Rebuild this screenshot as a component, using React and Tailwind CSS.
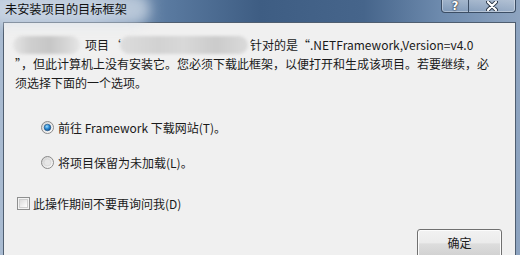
export default function App() {
  return (
    <div className="relative w-[520px] h-[255px] overflow-hidden flex flex-col font-['Noto_Sans_CJK_SC',sans-serif] text-[12px] text-[#1a1a1a] bg-[linear-gradient(to_right,#a9bbd1_0%,#9db1ca_18%,#5a7aa0_32%,#3e5d83_50%,#46658b_70%,#6e8bae_85%,#8ea4c0_100%)]">
      {/* Title bar */}
      <div className="relative h-[22px] flex items-start shrink-0">
        <div className="absolute left-[-10px] top-[-6px] w-[160px] h-[30px] rounded-full bg-[#d3dde8]/70 blur-[6px]" />
        <div className="relative pl-[5px] pt-[1px] leading-[16px] text-[12.2px] text-[#111]">未安装项目的目标框架</div>
        <div className="ml-auto mr-[4px] flex h-[14px] mt-[-1px] rounded-b-[4px] border border-t-0 border-[#3b4d64] shadow-[inset_0_0_0_1px_rgba(255,255,255,0.35)] overflow-hidden">
          <div className="w-[27px] h-full flex items-center justify-center bg-[linear-gradient(to_bottom,rgba(255,255,255,0.35),rgba(255,255,255,0.1))] border-r border-[#3b4d64] text-white text-[12px] font-bold leading-none font-['DejaVu_Sans',sans-serif] [text-shadow:0_0_2px_#223,0_0_1px_#000]">
            ?
          </div>
          <div className="w-[46px] h-full flex items-center justify-center bg-[linear-gradient(to_bottom,rgba(255,255,255,0.35),rgba(255,255,255,0.1))]">
            <svg width="12" height="10" viewBox="0 0 12 10">
              <path d="M2 1 L10 9 M10 1 L2 9" stroke="#2b3646" strokeWidth="4" strokeLinecap="round" />
              <path d="M2 1 L10 9 M10 1 L2 9" stroke="#ffffff" strokeWidth="2.2" strokeLinecap="round" />
            </svg>
          </div>
        </div>
      </div>

      {/* Client area */}
      <div className="flex-1 ml-[3px] mr-[4px] border border-b-0 border-[#4f5e70] bg-[#f0f0f0] flex flex-col pl-[11px] pt-[12px]">
        <div className="flex items-center h-[19px] whitespace-nowrap">
          <span className="inline-block ml-[-2px] w-[67px] h-[18px] rounded-full blur-[1.5px] bg-[linear-gradient(to_right,#e4e4e4_0%,#cfcfcf_25%,#c6c6c6_55%,#d6d6d6_80%,#e6e6e6_100%)]" />
          <span className="ml-[5px]">项目</span>
          <span className="inline-block w-[11px] text-right">‘</span>
          <span className="inline-block w-[128px] h-[18px] rounded-full blur-[1.5px] bg-[linear-gradient(to_right,#dcdcdc_0%,#d2d2d2_30%,#d8d8d8_50%,#cbcbcb_75%,#dadada_100%)]" />
          <span className="ml-[2px]">针对的是“.NETFramework,Version=v4.0</span>
        </div>
        <div className="h-[19px] leading-[19px] whitespace-nowrap">”，但此计算机上没有安装它。您必须下载此框架，以便打开和生成该项目。若要继续，必</div>
        <div className="h-[19px] leading-[19px] whitespace-nowrap">须选择下面的一个选项。</div>

        <div className="mt-[26px] ml-[26px] flex items-center h-[19px] gap-[4px] whitespace-nowrap">
          <svg width="13" height="13" viewBox="0 0 13 13">
            <defs>
              <linearGradient id="rg1" x1="0" y1="0" x2="1" y2="1">
                <stop offset="0" stopColor="#d0d0d0" />
                <stop offset="1" stopColor="#ffffff" />
              </linearGradient>
              <radialGradient id="dot" cx="0.4" cy="0.35" r="0.7">
                <stop offset="0" stopColor="#9fdcfb" />
                <stop offset="0.5" stopColor="#2a8ad4" />
                <stop offset="1" stopColor="#0d4a8a" />
              </radialGradient>
            </defs>
            <circle cx="6.5" cy="6.5" r="6" fill="url(#rg1)" stroke="#8a8a8a" strokeWidth="1" />
            <circle cx="6.5" cy="6.5" r="3.3" fill="url(#dot)" stroke="#1b4e7e" strokeWidth="0.6" />
          </svg>
          <span>前往 Framework 下载网站(T)。</span>
        </div>
        <div className="mt-[16px] ml-[26px] flex items-center h-[19px] gap-[4px] whitespace-nowrap">
          <svg width="13" height="13" viewBox="0 0 13 13">
            <defs>
              <linearGradient id="rg2" x1="0" y1="0" x2="1" y2="1">
                <stop offset="0" stopColor="#cfcfcf" />
                <stop offset="1" stopColor="#ffffff" />
              </linearGradient>
            </defs>
            <circle cx="6.5" cy="6.5" r="6" fill="url(#rg2)" stroke="#8a8a8a" strokeWidth="1" />
            <circle cx="6.5" cy="6.5" r="3.5" fill="#e6e6e6" stroke="#d0d0d0" strokeWidth="0.6" />
          </svg>
          <span>将项目保留为未加载(L)。</span>
        </div>

        <div className="mt-[22px] ml-[2px] flex items-center h-[19px] gap-[3px] whitespace-nowrap">
          <span className="inline-block w-[13px] h-[13px] border border-[#8e8f8f] bg-[#f4f4f4] p-[1px]">
            <span className="block w-full h-full border border-[#cfcfcf] bg-[linear-gradient(135deg,#dcdcdc,#ffffff)]" />
          </span>
          <span>此操作期间不要再询问我(D)</span>
        </div>

        <div className="mt-[16px] self-end mr-[13px] w-[85px] h-[30px] rounded-[3px] border border-[#707070] bg-[linear-gradient(to_bottom,#f2f2f2_0%,#ebebeb_45%,#dddddd_50%,#cfcfcf_100%)] shadow-[inset_0_0_0_1px_#fcfcfc] flex justify-center pt-[5px] leading-[16px] shrink-0">
          确定
        </div>
      </div>
    </div>
  );
}
